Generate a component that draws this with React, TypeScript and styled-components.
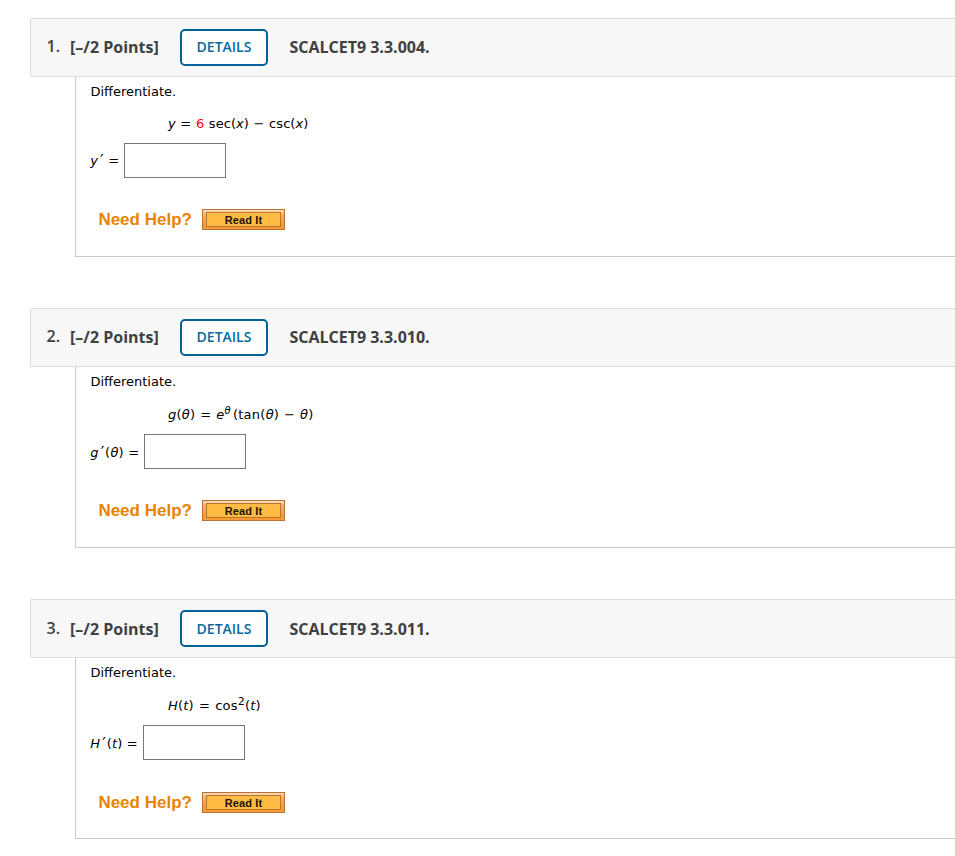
import React from "react";
import styled, { createGlobalStyle } from "styled-components";

const GlobalStyle = createGlobalStyle`
  *, *::before, *::after { box-sizing: border-box; }
  html, body { margin: 0; padding: 0; background: #fff; }
  body { overflow: hidden; }
`;

const Page = styled.main`
  width: 100%;
  height: 856px;
  padding: 18px 0 0 30px;
  display: flex;
  flex-direction: column;
  gap: 51px;
  overflow: hidden;
  color: #000;
  font-family: Verdana, "DejaVu Sans", sans-serif;
  font-size: 13px;
`;

const Question = styled.section`
  display: flex;
  flex-direction: column;
`;

const DetailsButton = styled.button`
  width: 88px;
  height: 37px;
  margin-right: 21px;
  border: 2px solid #006298;
  border-radius: 5px;
  background: #fff;
  color: #086a9e;
  font: 600 14px/18px "Open Sans", sans-serif;
`;

const Header = styled.header<{ $drop: number }>`
  height: 59px;
  display: flex;
  align-items: center;
  padding-left: 15px;
  background: #f7f7f7;
  border: 1px solid #dedede;
  border-right: 0;
  border-radius: 2px 0 0 2px;
  color: #404040;
  font-family: "Open Sans", sans-serif;
  font-size: 16px;
  font-weight: 700;
  line-height: 22px;
  white-space: nowrap;

  & > span {
    padding-bottom: ${(p) => 2 - p.$drop * 2}px;
  }

  & > ${DetailsButton} {
    padding: ${(p) => p.$drop}px 0 ${(p) => 1 - p.$drop}px;
  }
`;

const Num = styled.span`
  width: 24px;
  margin-top: -2px;
  padding-left: 0.5px;
  font-size: 16px;
  font-weight: 600;
`;

const Points = styled.span`
  width: 110px;
`;

const Code = styled.span`
  padding-left: 0.4px;
`;

const Body = styled.div<{ $height: number }>`
  height: ${(p) => p.$height}px;
  margin-left: 45px;
  padding: 6px 0 0 14px;
  border-left: 1px solid #c8c8c8;
  border-bottom: 1px solid #c8c8c8;
  display: flex;
  flex-direction: column;
  line-height: 17px;
  white-space: nowrap;
`;

const Prompt = styled.div`
  padding-left: 0.4px;
`;

const Equation = styled.div<{ $gap: number; $word: number; $letter: number }>`
  margin: ${(p) => p.$gap}px 0 0 78px;
  height: 17px;
  word-spacing: ${(p) => p.$word}px;
  letter-spacing: ${(p) => p.$letter}px;
`;

const Answer = styled.label<{ $gap: number }>`
  margin-top: ${(p) => p.$gap}px;
  height: 35px;
  display: flex;
  align-items: center;
`;

const AnswerText = styled.span<{ $width: number; $drop: number }>`
  width: ${(p) => p.$width}px;
  padding-top: ${(p) => p.$drop * 2}px;
  padding-left: 0.3px;
  letter-spacing: ${(p) => p.$drop * 0.2}px;
`;

const Prime = styled.span`
  margin: 0 0.5px 0 2px;
  font-size: 16px;
  line-height: 0;
  vertical-align: -1px;
`;

const AnswerInput = styled.input`
  width: 102px;
  height: 35px;
  padding: 4px;
  border: 1px solid #767676;
  border-radius: 0;
  background: #fff;
  font: inherit;
`;

const Help = styled.div<{ $gap: number }>`
  margin: ${(p) => p.$gap}px 0 0 8px;
  height: 21px;
  display: flex;
  align-items: center;
  font-family: Arial, "Liberation Sans", sans-serif;
`;

const HelpLabel = styled.span`
  width: 104px;
  padding-left: 0.4px;
  color: #e98300;
  font-size: 17px;
  font-weight: 700;
  line-height: 20px;
`;

const ReadButton = styled.button`
  width: 83px;
  height: 21px;
  padding: 2px 3px;
  display: flex;
  border: 1px solid #b87333;
  background: linear-gradient(#fedfc4 0, #fbb06a 4px, #fa9a32 14px, #fa9a32 100%);
`;

const ReadFace = styled.span`
  flex: 1;
  height: 15px;
  padding-top: 1px;
  border: 1px solid #b9782f;
  background: #ffbb43;
  color: #1a1208;
  font: 700 11px/13px Arial, "Liberation Sans", sans-serif;
  letter-spacing: 0.1px;
  text-align: center;
`;

const Red = styled.span`
  color: #f00;
`;

const Sup = styled.sup<{ $size: number; $after?: number }>`
  font-size: ${(p) => p.$size}px;
  line-height: 0;
  vertical-align: 5.5px;
  margin-right: ${(p) => p.$after ?? 0}px;
`;

interface Item {
  id: number;
  code: string;
  drop: number;
  height: number;
  equationGap: number;
  answerGap: number;
  helpGap: number;
  answerWidth: number;
  answerDrop: number;
  word: number;
  letter: number;
  equation: React.ReactNode;
  answer: React.ReactNode;
}

const items: Item[] = [
  {
    id: 1,
    code: "SCALCET9 3.3.004.",
    drop: 0,
    height: 180,
    equationGap: 15,
    answerGap: 11,
    helpGap: 31,
    answerWidth: 34,
    answerDrop: 0,
    word: 0.4,
    letter: 0.06,
    equation: <><i>y</i> = <Red>6</Red> sec(<i>x</i>) − csc(<i>x</i>)</>,
    answer: <><i>y</i><Prime>′</Prime> =</>,
  },
  {
    id: 2,
    code: "SCALCET9 3.3.010.",
    drop: 0,
    height: 181,
    equationGap: 16,
    answerGap: 11,
    helpGap: 31,
    answerWidth: 54,
    answerDrop: 1,
    word: 0.5,
    letter: 0.25,
    equation: <><i>g</i>(<i>θ</i>) = <i>e</i><Sup $size={10} $after={2}><i>θ</i></Sup>(tan(<i>θ</i>) − <i>θ</i>)</>,
    answer: <><i>g</i><Prime>′</Prime>(<i>θ</i>) =</>,
  },
  {
    id: 3,
    code: "SCALCET9 3.3.011.",
    drop: 1,
    height: 181,
    equationGap: 16,
    answerGap: 11,
    helpGap: 32,
    answerWidth: 53,
    answerDrop: 1,
    word: 0.8,
    letter: 0.2,
    equation: <><i>H</i>(<i>t</i>) = cos<Sup $size={11}>2</Sup>(<i>t</i>)</>,
    answer: <><i>H</i><Prime>′</Prime>(<i>t</i>) =</>,
  },
];

export default function App() {
  return (
    <>
      <GlobalStyle />
      <Page>
        {items.map((q) => (
          <Question key={q.id}>
            <Header $drop={q.drop}>
              <Num>{q.id}.</Num>
              <Points>[–/2 Points]</Points>
              <DetailsButton>DETAILS</DetailsButton>
              <Code>{q.code}</Code>
            </Header>
            <Body $height={q.height}>
              <Prompt>Differentiate.</Prompt>
              <Equation $gap={q.equationGap} $word={q.word} $letter={q.letter}>{q.equation}</Equation>
              <Answer $gap={q.answerGap}>
                <AnswerText $width={q.answerWidth} $drop={q.answerDrop}>{q.answer}</AnswerText>
                <AnswerInput />
              </Answer>
              <Help $gap={q.helpGap}>
                <HelpLabel>Need Help?</HelpLabel>
                <ReadButton>
                  <ReadFace>Read It</ReadFace>
                </ReadButton>
              </Help>
            </Body>
          </Question>
        ))}
      </Page>
    </>
  );
}
